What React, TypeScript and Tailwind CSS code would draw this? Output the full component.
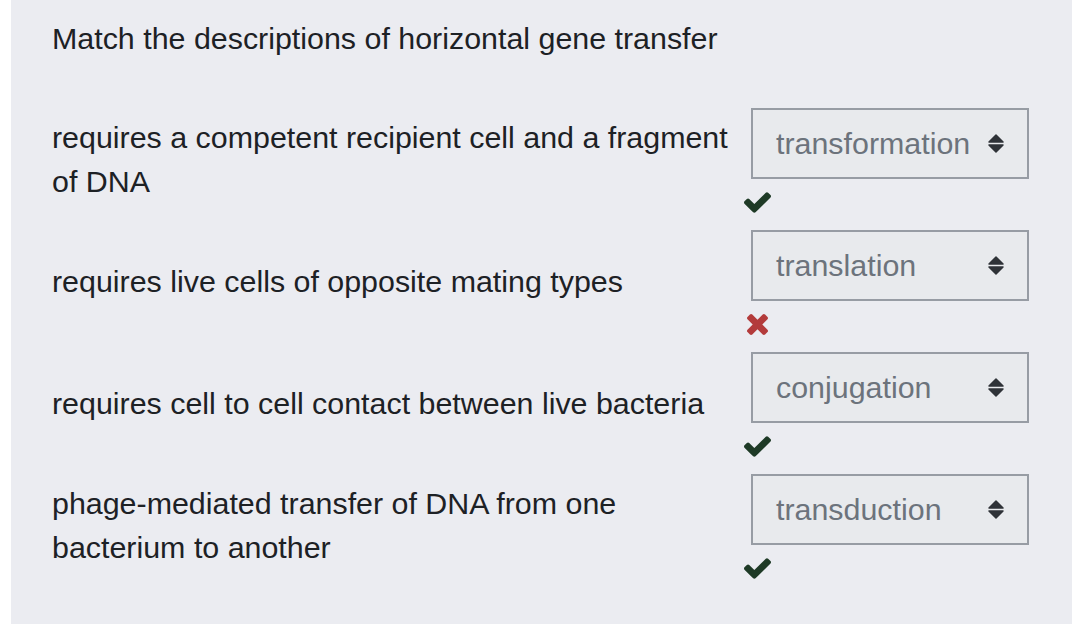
import React from "react";

const Check = () => (
  <svg width="27" height="21" viewBox="121 334 1550 1188" className="block">
    <path
      fill="#1e3a26"
      d="M1671 566q0 40-28 68l-724 724-136 136q-28 28-68 28t-68-28l-136-136-362-362q-28-28-28-68t28-68l136-136q28-28 68-28t68 28l294 295 656-657q28-28 68-28t68 28l136 136q28 28 28 68z"
    />
  </svg>
);

const Cross = () => (
  <svg width="21" height="21" viewBox="110 366 1188 1188" className="block ml-[3px]">
    <path
      fill="#b33b3b"
      d="M1298 1322q0 40-28 68l-136 136q-28 28-68 28t-68-28l-294-294-294 294q-28 28-68 28t-68-28l-136-136q-28-28-28-68t28-68l294-294-294-294q-28-28-28-68t28-68l136-136q28-28 68-28t68 28l294 294 294-294q28-28 68-28t68 28l136 136q28 28 28 68t-28 68l-294 294 294 294q28 28 28 68z"
    />
  </svg>
);

const SortArrows = () => (
  <svg width="16" height="19" viewBox="0 0 16 19" className="block">
    <path d="M1 8 L8 1 L15 8 Z" fill="#2f3338" stroke="#2f3338" strokeWidth="1.5" strokeLinejoin="round" />
    <path d="M1 11 L15 11 L8 18 Z" fill="#2f3338" stroke="#2f3338" strokeWidth="1.5" strokeLinejoin="round" />
  </svg>
);

type Row = { text: string; answer: string; ok: boolean };

const rows: Row[] = [
  { text: "requires a competent recipient cell and a fragment of DNA", answer: "transformation", ok: true },
  { text: "requires live cells of opposite mating types", answer: "translation", ok: false },
  { text: "requires cell to cell contact between live bacteria", answer: "conjugation", ok: true },
  { text: "phage-mediated transfer of DNA from one bacterium to another", answer: "transduction", ok: true },
];

export default function App() {
  return (
    <div
      className="w-[1076px] h-[624px] bg-white flex"
      style={{ fontFamily: '"Liberation Sans", Arial, Helvetica, sans-serif' }}
    >
      <div className="ml-[11px] w-[1061px] h-full bg-[#ebecf1] pl-[41px] pt-[16px] text-[#1d2125]">
        <div className="text-[30.4px] leading-[44px]">Match the descriptions of horizontal gene transfer</div>
        <div className="mt-[48px] flex flex-col gap-[15px]">
          {rows.map((r) => (
            <div key={r.answer} className="flex items-center">
              <div className="w-[692px] text-[30.4px] leading-[44px] mb-[6px]">{r.text}</div>
              <div className="flex flex-col w-[290px]">
                <div className="ml-[7px] w-[278px] h-[71px] border-2 border-[#979ca4] bg-[#e8eaed] flex items-center justify-between pl-[23px] pr-[23px]">
                  <span className="text-[30.4px] leading-none text-[#6c737c]">{r.answer}</span>
                  <SortArrows />
                </div>
                <div className="h-[36px] pt-[13px]">{r.ok ? <Check /> : <Cross />}</div>
              </div>
            </div>
          ))}
        </div>
      </div>
    </div>
  );
}
